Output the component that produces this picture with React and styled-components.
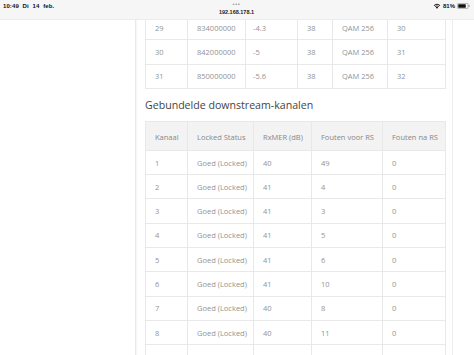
import React from "react";
import styled, { createGlobalStyle } from "styled-components";

const Global = createGlobalStyle`
  html, body { margin: 0; padding: 0; background: #fff; }
  body { font-family: "Open Sans", "Noto Sans", sans-serif; }
`;

const Screen = styled.div`
  width: 474px;
  height: 355px;
  overflow: hidden;
  display: flex;
  flex-direction: column;
  background: #fff;
`;

const StatusBar = styled.div`
  height: 20px;
  flex: none;
  background: #f6f6f6;
  border-bottom: 1px solid #ececec;
  display: grid;
  grid-template-columns: 1fr auto 1fr;
  align-items: start;
  padding: 0 4px 0 3px;
  box-sizing: border-box;
  font-family: "Liberation Sans", Arial, sans-serif;
  color: #111;
  position: relative;
  z-index: 2;
`;

const Time = styled.div`
  font-size: 6px;
  font-weight: 600;
  padding-top: 3px;
  letter-spacing: 0.1px;
  word-spacing: 2px;
`;

const Center = styled.div`
  display: flex;
  flex-direction: column;
  align-items: center;
`;

const Dots = styled.div`
  font-size: 6px;
  color: #999;
  line-height: 7px;
  letter-spacing: 0.5px;
  padding-top: 1px;
`;

const Url = styled.div`
  font-size: 5.5px;
  font-weight: 600;
  line-height: 8px;
  color: #222;
`;

const Right = styled.div`
  justify-self: end;
  display: flex;
  align-items: center;
  gap: 2px;
  padding-top: 3px;
  font-size: 6px;
  font-weight: 600;
`;

const Viewport = styled.div`
  flex: 1;
  overflow: hidden;
  display: flex;
`;

const Sidebar = styled.div`
  width: 135px;
  flex: none;
  border-right: 1px solid #e9e9e9;
  box-shadow: 1px 0 1px rgba(0,0,0,0.03);
`;

const Main = styled.div`
  width: 317px;
  flex: none;
  border-right: 1px solid #ededed;
  padding-left: 9px;
  box-sizing: border-box;
  margin-top: -5px;
`;

const Table = styled.table`
  border-collapse: collapse;
  table-layout: fixed;
  width: 300px;
  font-size: 7.5px;
  color: #939393;
  border: 1px solid #e8e8e8;
`;

const Row = styled.tr`
  height: ${(p) => p.$h || 24.3}px;
`;

const Cell = styled.td`
  border: 1px solid #e8e8e8;
  padding: 0 0 0 ${(p) => p.$pad ?? 9}px;
  white-space: nowrap;
  overflow: hidden;
  vertical-align: middle;
`;

const Head = styled.th`
  border: 1px solid #e8e8e8;
  background: #f3f3f3;
  padding: 3px 0 0 9px;
  font-weight: 400;
  text-align: left;
  color: #888;
  white-space: nowrap;
  overflow: hidden;
`;

const Heading = styled.h2`
  margin: 0;
  font-size: 10.6px;
  font-weight: 400;
  color: #444;
  padding: 9px 0 0 0;
  height: 32px;
  box-sizing: border-box;
`;

const top = [
  ["29", "834000000", "-4.3", "38", "QAM 256", "30"],
  ["30", "842000000", "-5", "38", "QAM 256", "31"],
  ["31", "850000000", "-5.6", "38", "QAM 256", "32"],
];
const topW = [42, 58, 52, 35, 55, 58];

const bottom = [
  ["1", "Goed (Locked)", "40", "49", "0"],
  ["2", "Goed (Locked)", "41", "4", "0"],
  ["3", "Goed (Locked)", "41", "3", "0"],
  ["4", "Goed (Locked)", "41", "5", "0"],
  ["5", "Goed (Locked)", "41", "6", "0"],
  ["6", "Goed (Locked)", "41", "10", "0"],
  ["7", "Goed (Locked)", "40", "8", "0"],
  ["8", "Goed (Locked)", "40", "11", "0"],
  ["9", "Goed (Locked)", "41", "4", "0"],
];
const botW = [42, 66, 58, 71, 63];
const heads = ["Kanaal", "Locked Status", "RxMER (dB)", "Fouten voor RS", "Fouten na RS"];

const Wifi = () => (
  <svg width="8" height="6" viewBox="0 0 16 12">
    <path d="M8 11.5 L5.6 8.8 A3.5 3.5 0 0 1 10.4 8.8 Z" fill="#111" />
    <path d="M3.6 6.8 A6.5 6.5 0 0 1 12.4 6.8 L11.2 8 A4.8 4.8 0 0 0 4.8 8 Z" fill="#111" />
    <path d="M1.4 4.6 A9.6 9.6 0 0 1 14.6 4.6 L13.4 5.8 A7.9 7.9 0 0 0 2.6 5.8 Z" fill="#111" />
  </svg>
);

const Battery = () => (
  <svg width="13" height="6" viewBox="0 0 26 12">
    <rect x="0.75" y="0.75" width="21.5" height="10.5" rx="2.5" fill="none" stroke="#999" strokeWidth="1.5" />
    <rect x="2.5" y="2.5" width="15" height="7" rx="1" fill="#111" />
    <rect x="23.5" y="4" width="1.8" height="4" rx="0.8" fill="#999" />
  </svg>
);

export default function App() {
  return (
    <Screen>
      <Global />
      <StatusBar>
        <Time>10:49 Di 14 feb.</Time>
        <Center>
          <Dots>•••</Dots>
          <Url>192.168.178.1</Url>
        </Center>
        <Right>
          <Wifi />
          <span>81%</span>
          <Battery />
        </Right>
      </StatusBar>
      <Viewport>
        <Sidebar />
        <Main>
          <Table>
            <colgroup>
              {topW.map((w, i) => (
                <col key={i} style={{ width: w }} />
              ))}
            </colgroup>
            <tbody>
              {top.map((r, i) => (
                <Row key={i}>
                  {r.map((c, j) => (
                    <Cell key={j} $pad={j === 2 ? 7 : 9}>{c}</Cell>
                  ))}
                </Row>
              ))}
            </tbody>
          </Table>
          <Heading>Gebundelde downstream-kanalen</Heading>
          <Table>
            <colgroup>
              {botW.map((w, i) => (
                <col key={i} style={{ width: w }} />
              ))}
            </colgroup>
            <thead>
              <Row $h={29}>
                {heads.map((h) => (
                  <Head key={h}>{h}</Head>
                ))}
              </Row>
            </thead>
            <tbody>
              {bottom.map((r, i) => (
                <Row key={i}>
                  {r.map((c, j) => (
                    <Cell key={j}>{c}</Cell>
                  ))}
                </Row>
              ))}
            </tbody>
          </Table>
        </Main>
      </Viewport>
    </Screen>
  );
}
